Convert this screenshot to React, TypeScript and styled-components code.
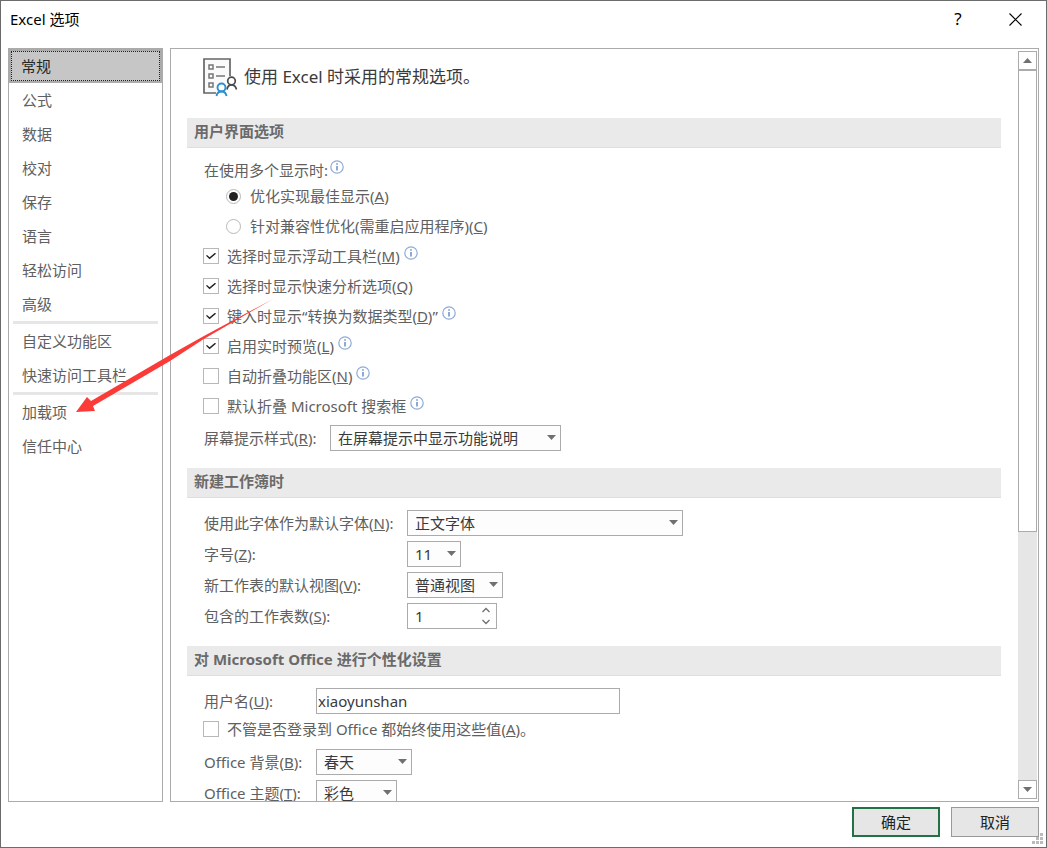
import React from "react";
import styled, { createGlobalStyle } from "styled-components";

const GlobalStyle = createGlobalStyle`
  *, *::before, *::after { box-sizing: border-box; }
  body { margin: 0; background: #fff; }
  body, button, input, select {
    font-family: "Noto Sans", "Noto Sans CJK SC", sans-serif;
    font-size: 15px;
    line-height: 20px;
  }
`;

const Dialog = styled.div`
  position: relative;
  display: flex;
  flex-direction: column;
  height: 100vh;
  border: 1px solid #6b6b6b;
  background: #fff;
  color: #606060;
`;

const TitleBar = styled.header`
  flex: none;
  display: flex;
  align-items: center;
  height: 47px;
  padding: 0 21px 11px 9px;
  color: #000;
`;

const Title = styled.h1`
  flex: 1;
  margin: 0;
  font-size: 15px;
  font-weight: 400;
`;

const WindowButton = styled.button`
  display: flex;
  align-items: center;
  justify-content: center;
  width: 20px;
  height: 20px;
  margin-left: 37px;
  padding: 0;
  border: 0;
  background: none;
  color: #000;
  font-size: 17px;
`;

const Body = styled.div`
  flex: 1;
  min-height: 0;
  display: flex;
  gap: 7px;
  padding: 0 7px;
`;

const Sidebar = styled.nav`
  flex: none;
  width: 155px;
  border: 1px solid #ababab;
`;

const NavItem = styled.button<{ $active?: boolean }>`
  display: flex;
  align-items: center;
  width: 100%;
  height: 34px;
  padding: 0 0 0 ${(p) => (p.$active ? 10 : 11)}px;
  border: ${(p) => (p.$active ? "2px solid #ababab" : "2px solid transparent")};
  outline: ${(p) => (p.$active ? "1px dotted #222" : "none")};
  outline-offset: -3px;
  background: ${(p) => (p.$active ? "#c6c6c6" : "transparent")};
  color: ${(p) => (p.$active ? "#262626" : "#606060")};
  text-align: left;
`;

const NavRule = styled.hr`
  height: 3px;
  margin: 0 4px;
  border: 0;
  background: #e6e6e6;
`;

const Panel = styled.main`
  flex: 1;
  min-width: 0;
  display: flex;
  gap: 17px;
  padding: 0 1px 0 16px;
  border: 1px solid #ababab;
`;

const Content = styled.div`
  flex: 1;
  min-width: 0;
  overflow: hidden;
`;

const Intro = styled.div`
  display: flex;
  align-items: center;
  gap: 6px;
  height: 69px;
  padding: 0 0 13px 15px;
  color: #3a3a3a;
  font-size: 17px;
`;

const SectionTitle = styled.h2`
  height: 30px;
  margin: 0;
  padding: 3px 7px;
  border-bottom: 1px solid #dedede;
  background: #eaeaea;
  color: #6a6a6a;
  font-size: 15px;
  font-weight: 700;
`;

const SectionBody = styled.div`
  padding: 12px 0 17px 16px;
`;

const Caption = styled.div`
  display: flex;
  align-items: center;
  height: 21px;
  padding: 0 0 2px 1px;
`;

const OptionRow = styled.div<{ $indent?: boolean }>`
  display: flex;
  align-items: center;
  height: 30px;
  padding-left: ${(p) => (p.$indent ? 23 : 0)}px;
`;

const OptionLabel = styled.label<{ $gap?: number }>`
  display: flex;
  align-items: center;
  gap: ${(p) => p.$gap ?? 8}px;
`;

const CheckInput = styled.input`
  flex: none;
  appearance: none;
  display: grid;
  place-items: center;
  width: 16px;
  height: 16px;
  margin: 0;
  border: 1px solid #b8b8b8;
  background: #fff;
  &:checked::before {
    content: "";
    width: 10px;
    height: 7px;
    background: #222;
    clip-path: polygon(0 48%, 10% 34%, 36% 68%, 90% 4%, 100% 18%, 36% 98%);
  }
`;

const RadioInput = styled.input`
  flex: none;
  appearance: none;
  display: grid;
  place-items: center;
  width: 15px;
  height: 15px;
  margin: 0;
  border: 1px solid #b8b8b8;
  border-radius: 50%;
  background: #fff;
  &:checked::before {
    content: "";
    width: 9px;
    height: 9px;
    border-radius: 50%;
    background: #222;
  }
`;

const FieldList = styled.div<{ $labels: number; $top?: number }>`
  display: grid;
  grid-template-columns: ${(p) => p.$labels}px auto;
  justify-content: start;
  row-gap: 5px;
  margin-top: ${(p) => p.$top ?? 0}px;
  padding-left: 1px;
`;

const FieldLabel = styled.label`
  line-height: 26px;
`;

const SelectBox = styled.div<{ $width: number }>`
  position: relative;
  width: ${(p) => p.$width}px;
  height: 26px;
`;

const Select = styled.select`
  appearance: none;
  display: block;
  width: 100%;
  height: 26px;
  padding: 0 0 0 7px;
  border: 1px solid #ababab;
  border-radius: 0;
  background: #fdfdfd;
  color: #3a3a3a;
`;

const SelectArrow = styled.svg`
  position: absolute;
  top: 10px;
  right: 5px;
  pointer-events: none;
`;

const TextInput = styled.input<{ $width: number; $pad?: number }>`
  appearance: none;
  display: block;
  width: ${(p) => p.$width}px;
  height: 26px;
  padding: 0 0 0 ${(p) => p.$pad ?? 1}px;
  border: 1px solid #ababab;
  background: #fff;
  color: #3a3a3a;
`;

const SpinBox = styled.div`
  position: relative;
  width: 90px;
`;

const SpinArrows = styled.svg`
  position: absolute;
  top: 4px;
  right: 7px;
`;

const InfoSvg = styled.svg<{ $gap?: number }>`
  flex: none;
  margin: 0 0 6px ${(p) => p.$gap ?? 4}px;
`;

const ScrollBar = styled.div`
  flex: none;
  display: flex;
  flex-direction: column;
  width: 19px;
  margin: 2px 0;
  background: #e6e6e6;
`;

const ScrollButton = styled.button`
  flex: none;
  display: flex;
  align-items: center;
  justify-content: center;
  height: 19px;
  padding: 0;
  border: 1px solid #ababab;
  background: #fff;
`;

const ScrollTrack = styled.div`
  flex: 1;
`;

const ScrollThumb = styled.div`
  height: 65%;
  border: 1px solid #ababab;
  background: #fff;
`;

const Footer = styled.footer`
  flex: none;
  display: flex;
  justify-content: flex-end;
  gap: 11px;
  padding: 5px 7px 10px;
`;

const ActionButton = styled.button<{ $primary?: boolean }>`
  width: 88px;
  height: 30px;
  padding: 0;
  border: ${(p) => (p.$primary ? "2px solid #217346" : "1px solid #999")};
  background: #e6e6e6;
  color: #222;
`;

const Grip = styled.svg`
  position: absolute;
  right: 2px;
  bottom: 2px;
`;

const Pointer = styled.svg`
  position: absolute;
  left: 75px;
  top: 298px;
  pointer-events: none;
`;

const Info = ({ gap }: { gap?: number }) => (
  <InfoSvg $gap={gap} width="14" height="14" viewBox="0 0 14 14" aria-hidden="true">
    <circle cx="7" cy="7" r="6.2" fill="#fff" stroke="#8fabd8" strokeWidth="1.2" />
    <path d="M7 3.2v1.6M7 6v4.6" stroke="#4472b8" strokeWidth="1.2" />
  </InfoSvg>
);

const Triangle = ({ up }: { up?: boolean }) => (
  <svg width="9" height="5" viewBox="0 0 9 5" aria-hidden="true">
    <path d={up ? "M0 5L4.5 0L9 5z" : "M0 0h9L4.5 5z"} fill="#707070" />
  </svg>
);

const Key = ({ k }: { k: string }) => (
  <>
    (<u>{k}</u>)
  </>
);

interface CheckProps {
  children: React.ReactNode;
  checked?: boolean;
  info?: boolean;
}

const Check = ({ children, checked, info }: CheckProps) => (
  <OptionRow>
    <OptionLabel>
      <CheckInput type="checkbox" defaultChecked={checked} />
      <span>{children}</span>
    </OptionLabel>
    {info && <Info />}
  </OptionRow>
);

interface DropProps {
  id: string;
  label: React.ReactNode;
  value: string;
  width: number;
}

const Drop = ({ id, label, value, width }: DropProps) => (
  <>
    <FieldLabel htmlFor={id}>{label}</FieldLabel>
    <SelectBox $width={width}>
      <Select id={id}>
        <option>{value}</option>
      </Select>
      <SelectArrow width="9" height="5" viewBox="0 0 9 5" aria-hidden="true">
        <path d="M0 0h9L4.5 5z" fill="#707070" />
      </SelectArrow>
    </SelectBox>
  </>
);

const GROUPS = [
  ["常规", "公式", "数据", "校对", "保存", "语言", "轻松访问", "高级"],
  ["自定义功能区", "快速访问工具栏"],
  ["加载项", "信任中心"],
];

export default function App() {
  return (
    <>
      <GlobalStyle />
      <Dialog role="dialog" aria-labelledby="dialog-title">
        <TitleBar>
          <Title id="dialog-title">Excel 选项</Title>
          <WindowButton aria-label="帮助">?</WindowButton>
          <WindowButton aria-label="关闭">
            <svg width="13" height="13" viewBox="0 0 13 13">
              <path d="M.5.5l12 12M12.5.5l-12 12" stroke="#000" strokeWidth="1.1" />
            </svg>
          </WindowButton>
        </TitleBar>

        <Body>
          <Sidebar>
            {GROUPS.map((items, g) => (
              <React.Fragment key={g}>
                {g > 0 && <NavRule />}
                {items.map((item) => (
                  <NavItem key={item} $active={item === "常规"}>
                    {item}
                  </NavItem>
                ))}
              </React.Fragment>
            ))}
          </Sidebar>

          <Panel>
            <Content>
              <Intro>
                <svg width="36" height="40" viewBox="0 0 36 40" fill="none" aria-hidden="true">
                  <path d="M2 2h26v18l-14 16H2z" fill="#fafafa" />
                  <path d="M14 36H2V2h26v17" stroke="#666" strokeWidth="1.7" />
                  <path d="M7 8h4v4H7zM7 17h4v4H7zM7 26h4v4H7z" stroke="#777" strokeWidth="1.5" />
                  <path d="M14 10h9M14 19h9" stroke="#777" strokeWidth="1.4" />
                  <circle cx="29.5" cy="24" r="3.8" stroke="#4a4a4a" strokeWidth="1.7" />
                  <path d="M25 32.5c.5-3 2.200-4.700 4.500-4.700s4.300 1.700 5 4.700" stroke="#4a4a4a" strokeWidth="1.7" />
                  <circle cx="19.500" cy="30.500" r="4" fill="#fff" stroke="#2b8fd0" strokeWidth="1.900" />
                  <path d="M14.500 39c.5-3 2.500-4.500 5-4.500s4.500 1.500 5 4.500" stroke="#2b8fd0" strokeWidth="1.900" />
                </svg>
                <span>使用 Excel 时采用的常规选项。</span>
              </Intro>

              <SectionTitle>用户界面选项</SectionTitle>
              <SectionBody>
                <Caption>
                  在使用多个显示时:
                  <Info gap={2} />
                </Caption>
                <OptionRow $indent>
                  <OptionLabel $gap={9}>
                    <RadioInput type="radio" name="display" defaultChecked />
                    <span>优化实现最佳显示<Key k="A" /></span>
                  </OptionLabel>
                </OptionRow>
                <OptionRow $indent>
                  <OptionLabel $gap={9}>
                    <RadioInput type="radio" name="display" />
                    <span>针对兼容性优化(需重启应用程序)<Key k="C" /></span>
                  </OptionLabel>
                </OptionRow>
                <Check checked info>选择时显示浮动工具栏<Key k="M" /></Check>
                <Check checked>选择时显示快速分析选项<Key k="Q" /></Check>
                <Check checked info>键入时显示“转换为数据类型<Key k="D" />”</Check>
                <Check checked info>启用实时预览<Key k="L" /></Check>
                <Check info>自动折叠功能区<Key k="N" /></Check>
                <Check info>默认折叠 Microsoft 搜索框</Check>
                <FieldList $labels={126} $top={4}>
                  <Drop id="tips" label={<>屏幕提示样式<Key k="R" />:</>} value="在屏幕提示中显示功能说明" width={231} />
                </FieldList>
              </SectionBody>

              <SectionTitle>新建工作簿时</SectionTitle>
              <SectionBody>
                <FieldList $labels={203}>
                  <Drop id="font" label={<>使用此字体作为默认字体<Key k="N" />:</>} value="正文字体" width={276} />
                  <Drop id="size" label={<>字号<Key k="Z" />:</>} value="11" width={54} />
                  <Drop id="view" label={<>新工作表的默认视图<Key k="V" />:</>} value="普通视图" width={96} />
                  <FieldLabel htmlFor="sheets">包含的工作表数<Key k="S" />:</FieldLabel>
                  <SpinBox>
                    <TextInput id="sheets" $width={90} $pad={7} defaultValue="1" />
                    <SpinArrows width="8" height="18" viewBox="0 0 8 18" fill="none" aria-hidden="true">
                      <path d="M.5 5L4 1.5L7.5 5M.5 13L4 16.5L7.5 13" stroke="#707070" strokeWidth="1.3" />
                    </SpinArrows>
                  </SpinBox>
                </FieldList>
              </SectionBody>

              <SectionTitle>对 Microsoft Office 进行个性化设置</SectionTitle>
              <SectionBody>
                <FieldList $labels={112}>
                  <FieldLabel htmlFor="user">用户名<Key k="U" />:</FieldLabel>
                  <TextInput id="user" $width={304} defaultValue="xiaoyunshan" />
                </FieldList>
                <Check>不管是否登录到 Office 都始终使用这些值<Key k="A" />。</Check>
                <FieldList $labels={112} $top={5}>
                  <Drop id="bg" label={<>Office 背景<Key k="B" />:</>} value="春天" width={96} />
                  <Drop id="theme" label={<>Office 主题<Key k="T" />:</>} value="彩色" width={81} />
                </FieldList>
              </SectionBody>
            </Content>

            <ScrollBar>
              <ScrollButton aria-label="向上滚动"><Triangle up /></ScrollButton>
              <ScrollTrack><ScrollThumb /></ScrollTrack>
              <ScrollButton aria-label="向下滚动"><Triangle /></ScrollButton>
            </ScrollBar>
          </Panel>
        </Body>

        <Footer>
          <ActionButton $primary>确定</ActionButton>
          <ActionButton>取消</ActionButton>
        </Footer>

        <Grip width="12" height="12" viewBox="0 0 12 12" aria-hidden="true">
          <path d="M8 0h3v3h-3zM4 4h3v3h-3zM8 4h3v3h-3zM0 8h3v3h-3zM4 8h3v3h-3zM8 8h3v3h-3z" fill="#bbb" />
        </Grip>
        <Pointer width="200" height="116" viewBox="0 0 200 116" aria-hidden="true">
          <path d="M0 113L11 98L15 102L94 56L127 37.5L197 0L127 40.5L94 62L17 107L19 112z" fill="#fb3b38" />
        </Pointer>
      </Dialog>
    </>
  );
}
